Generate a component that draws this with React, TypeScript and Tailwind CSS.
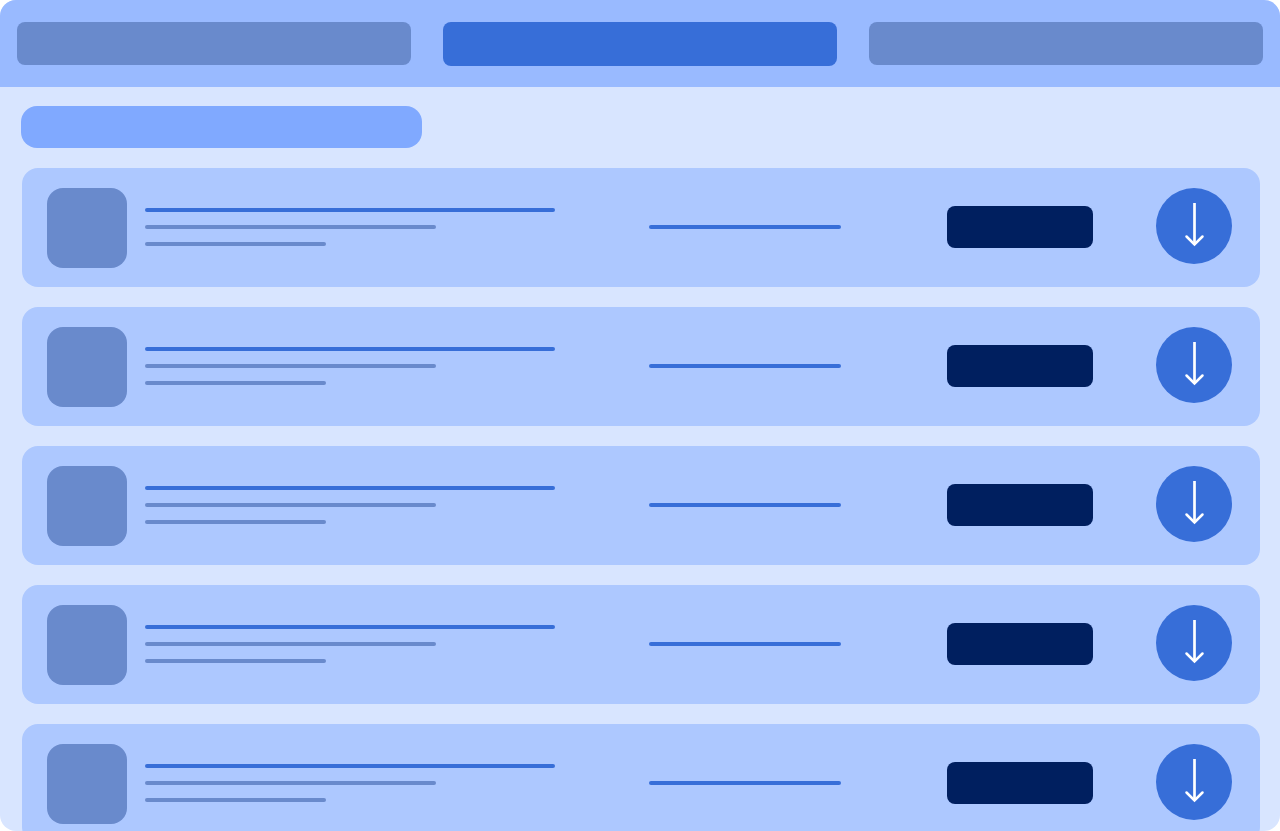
import clsx from 'clsx';

interface Tab {
  id: string;
  label: string;
}

const tabs: Tab[] = [
  { id: 'left', label: 'First tab' },
  { id: 'middle', label: 'Second tab' },
  { id: 'right', label: 'Third tab' },
];

const rows = [1, 2, 3, 4, 5];

function DownArrow() {
  return (
    <svg viewBox="0 0 76 76" className="size-full" fill="none" stroke="white" aria-hidden="true">
      <path d="M38.5 15V56" strokeWidth="2.7" />
      <path
        d="M30.5 48.5L38.5 56.5L46.5 48.5"
        strokeWidth="2.5"
        strokeLinecap="round"
      />
    </svg>
  );
}

function TabBar({ active }: { active: string }) {
  return (
    <nav className="grid shrink-0 grid-cols-3 items-start gap-8 bg-[#99baff] px-[17px] pt-[22px] pb-[21px]">
      {tabs.map((tab) => (
        <button
          key={tab.id}
          type="button"
          aria-label={tab.label}
          className={clsx(
            'rounded-lg',
            tab.id === active ? 'h-11 bg-[#376ed8]' : 'h-[43px] bg-[#698acc]'
          )}
        />
      ))}
    </nav>
  );
}

function Row({ index }: { index: number }) {
  return (
    <li className="grid h-[119px] grid-cols-[98px_504fr_298fr_209fr_76px] items-start rounded-2xl bg-[#adc8ff] pt-5 pr-7 pl-[25px]">
      <div className="size-20 rounded-2xl bg-[#698acc]" />

      {/* Title and details */}
      <div className="mt-5 flex flex-col gap-[13px]">
        <div className="h-1 w-[410px] max-w-full rounded-full bg-[#376ed8]" />
        <div className="h-1 w-[291px] max-w-full rounded-full bg-[#698acc]" />
        <div className="h-1 w-[181px] max-w-full rounded-full bg-[#698acc]" />
      </div>

      <div className="mt-[37px] h-1 w-48 max-w-full rounded-full bg-[#376ed8]" />

      <button
        type="button"
        aria-label={`Open item ${index}`}
        className="mt-[18px] h-[42px] w-[146px] max-w-full rounded-lg bg-[#001f5f]"
      />

      <button
        type="button"
        aria-label={`Download item ${index}`}
        className="size-[76px] rounded-full bg-[#376ed8]"
      >
        <DownArrow />
      </button>
    </li>
  );
}

export default function App() {
  return (
    <div className="bg-white">
      <div className="flex h-screen flex-col overflow-hidden rounded-2xl bg-[#d8e5ff]">
        <TabBar active="middle" />

        <main className="pt-[19px]">
          <div className="px-[21px]">
            <div className="h-[42px] w-[401px] max-w-full rounded-2xl bg-[#80a9ff]" />
          </div>

          <ul className="mt-5 flex flex-col gap-5 pr-5 pl-[22px]">
            {rows.map((row) => (
              <Row key={row} index={row} />
            ))}
          </ul>
        </main>
      </div>
    </div>
  );
}
